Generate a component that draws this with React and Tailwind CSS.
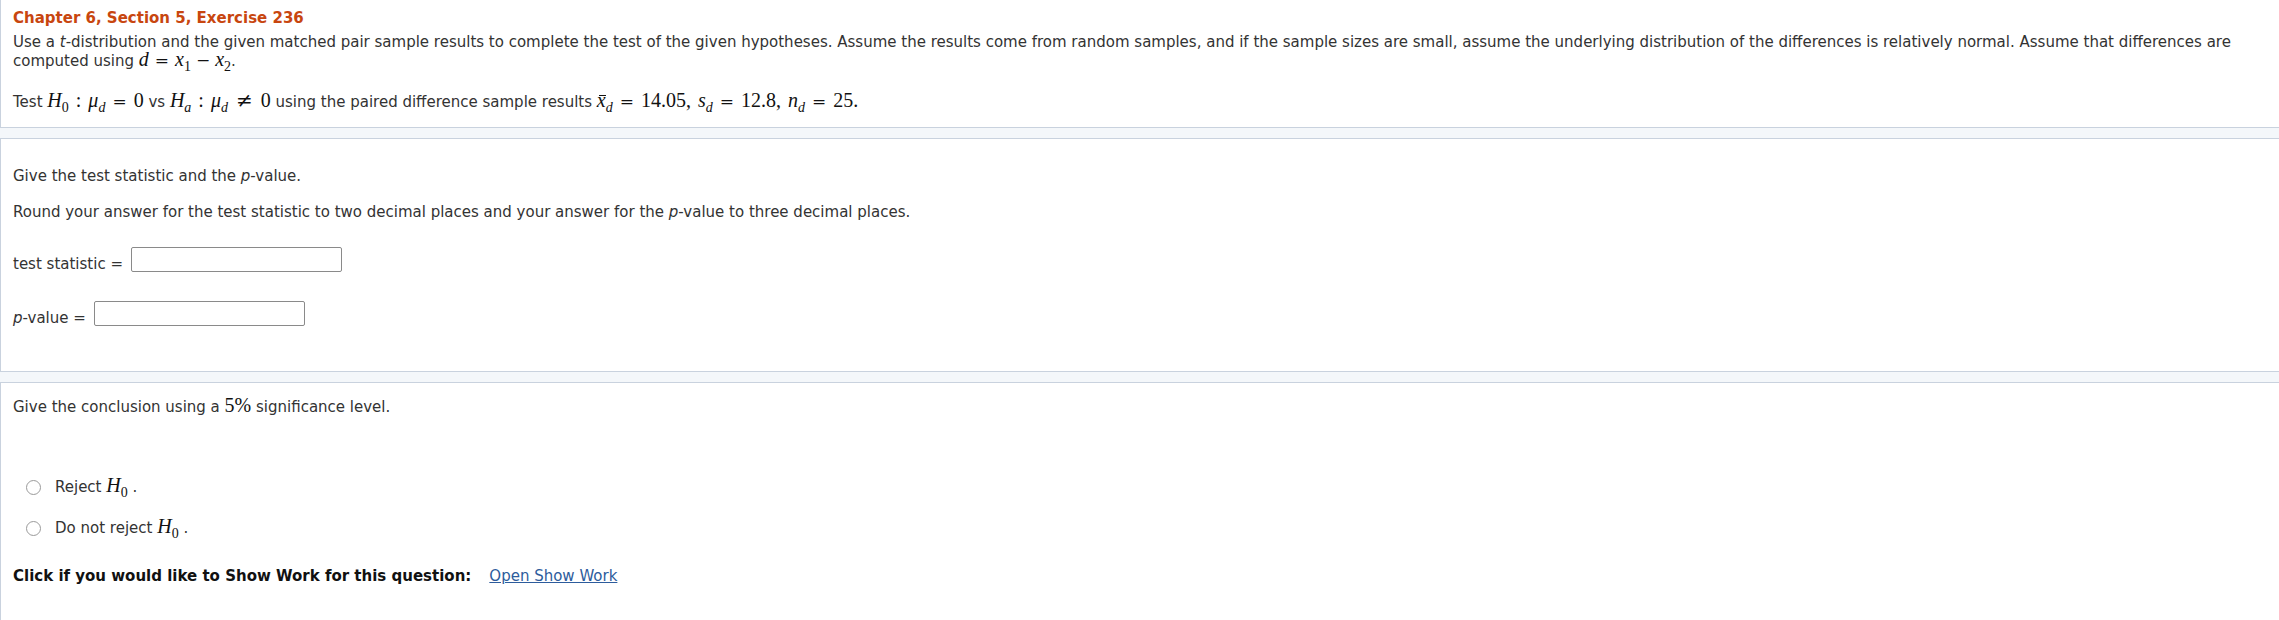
const sans = "font-['DejaVu_Sans',sans-serif]";

// inline math pieces, roughly what MathJax draws
function M({ children }) {
  return (
    <span className="font-['Liberation_Serif',serif] text-[20px] leading-[0] text-[#111] whitespace-nowrap">
      {children}
    </span>
  );
}

function V({ children }) {
  return <span className="italic">{children}</span>;
}

// x with a bar accent on top
function XBar() {
  return (
    <span className="relative italic">
      x
      <span className="absolute top-[6px] left-[2px] right-0 h-[1px] bg-[#111]" />
    </span>
  );
}

function Sb({ children }) {
  return <span className="text-[14px] leading-[0] align-[-5px]">{children}</span>;
}

// relation / binary signs use a wider serif so they read like TeX's
function Op({ c, space = 'mx-[5px]', size = 'text-[17px]' }) {
  return <span className={`${space} ${size} font-['DejaVu_Serif',serif]`}>{c}</span>;
}

function Colon() {
  return <span className="mx-[7px]">:</span>;
}

function Radio({ children }) {
  return (
    <div className="flex items-center h-[19px]">
      <span className="ml-[13px] w-[15px] h-[15px] rounded-full border border-[#9a9a9a] bg-white shrink-0" />
      <span className="ml-[14px]">{children}</span>
    </div>
  );
}

export default function App() {
  return (
    <div className={`min-h-screen flex flex-col bg-[#f4f7fa] text-[15px] leading-[19px] text-[#333] ${sans}`}>
      {/* question stem */}
      <div className="bg-white border-l border-b border-[#c9d2de] pl-[12px] pt-[9px] pb-[15px]">
        <h2 className="font-bold text-[#c8460f]">Chapter 6, Section 5, Exercise 236</h2>
        <p className="mt-[5px] whitespace-nowrap">
          Use a <i>t</i>-distribution and the given matched pair sample results to complete the test of the given hypotheses. Assume the results come from random samples, and if the sample sizes are small, assume the underlying distribution of the differences is relatively normal. Assume that differences are
          <br />
          computed using{' '}
          <M>
            <V>d</V>
            <Op c="=" space="mx-[6px]" />
            <V>x</V>
            <Sb>1</Sb>
            <Op c="−" />
            <V>x</V>
            <Sb>2</Sb>
          </M>
          .
        </p>
        <p className="mt-[22px] whitespace-nowrap">
          Test{' '}
          <M>
            <V>H</V>
            <Sb>0</Sb>
            <Colon />
            <V>μ</V>
            <Sb>
              <V>d</V>
            </Sb>
            <Op c="=" space="mx-[7px]" />0
          </M>{' '}
          vs{' '}
          <M>
            <V>H</V>
            <Sb>
              <V>a</V>
            </Sb>
            <Colon />
            <V>μ</V>
            <Sb>
              <V>d</V>
            </Sb>
            <Op c="≠" space="mx-[8px]" size="text-[20px]" />0
          </M>{' '}
          using the paired difference sample results{' '}
          <M>
            <XBar />
            <Sb>
              <V>d</V>
            </Sb>
            <Op c="=" space="mx-[7px]" />
            14.05,
            <span className="ml-[7px]" />
            <V>s</V>
            <Sb>
              <V>d</V>
            </Sb>
            <Op c="=" space="mx-[7px]" />
            12.8,
            <span className="ml-[7px]" />
            <V>n</V>
            <Sb>
              <V>d</V>
            </Sb>
            <Op c="=" space="mx-[7px]" />
            25.
          </M>
        </p>
      </div>

      {/* part 1: test statistic and p-value */}
      <div className="mt-[10px] bg-white border-l border-y border-[#c9d2de] pl-[12px] pt-[28px] pb-[43px]">
        <p>
          Give the test statistic and the <i>p</i>-value.
        </p>
        <p className="mt-[17px]">
          Round your answer for the test statistic to two decimal places and your answer for the <i>p</i>-value to three decimal places.
        </p>
        <div className="mt-[25px] flex items-end">
          <span>test statistic =</span>
          <input
            type="text"
            className="ml-[8px] mb-[2px] w-[211px] h-[25px] border border-[#8a8a8a] rounded-[2px] bg-white outline-none"
          />
        </div>
        <div className="mt-[27px] flex items-end">
          <span>
            <i>p</i>-value =
          </span>
          <input
            type="text"
            className="ml-[8px] mb-[2px] w-[211px] h-[25px] border border-[#8a8a8a] rounded-[2px] bg-white outline-none"
          />
        </div>
      </div>

      {/* part 2: conclusion */}
      <div className="flex-1 mt-[10px] bg-white border-l border-t border-[#c9d2de] pl-[12px] pt-[15px] pb-[30px]">
        <p>
          Give the conclusion using a <M>5%</M> significance level.
        </p>
        <div className="mt-[61px]">
          <Radio>
            Reject{' '}
            <M>
              <V>H</V>
              <Sb>0</Sb>
            </M>{' '}
            .
          </Radio>
        </div>
        <div className="mt-[22px]">
          <Radio>
            Do not reject{' '}
            <M>
              <V>H</V>
              <Sb>0</Sb>
            </M>{' '}
            .
          </Radio>
        </div>
        <p className="mt-[29px] flex items-baseline">
          <span className="font-bold text-[#111]">Click if you would like to Show Work for this question:</span>
          <a href="#" className="ml-[18px] text-[#2d5c9c] underline">
            Open Show Work
          </a>
        </p>
      </div>
    </div>
  );
}
